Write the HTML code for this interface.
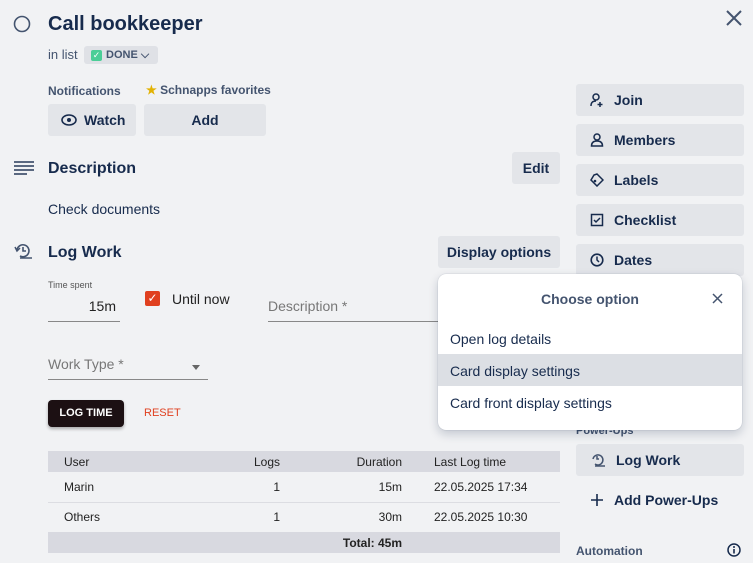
<!DOCTYPE html>
<html><head><style>
*{box-sizing:border-box;margin:0;padding:0}
body{width:753px;height:563px;overflow:hidden;background:#f1f2f4;font-family:"Liberation Sans",sans-serif;color:#172b4d;position:relative}
.a{position:absolute}
.btn{position:absolute;background:#e3e5e9;border-radius:3px;font-size:14px;font-weight:bold;color:#172b4d;display:flex;align-items:center}
.side{left:576px;width:168px;height:32px;padding-left:14px}
.side svg{margin-right:10px}
table{table-layout:fixed}
td{font-size:12px;color:#222;padding:0}
tr.h td{height:21px}
tr.r td{height:30px}
</style></head><body>
<svg class="a" style="left:13px;top:15px" width="18" height="18"><circle cx="9" cy="9" r="7.5" fill="none" stroke="#44546f" stroke-width="1.6"/></svg>
<div class="a" style="left:48px;top:13px;font-size:20px;font-weight:bold">Call bookkeeper</div>
<svg class="a" style="left:726px;top:10px" width="16" height="16"><path d="M1 1L15 15M15 1L1 15" stroke="#44546f" stroke-width="2"/></svg>
<div class="a" style="left:48px;top:47px;font-size:13px;color:#44546f">in list</div>
<div class="a" style="left:84px;top:46px;width:74px;height:18px;background:#dfe1e6;border-radius:3px;font-size:11px;font-weight:bold;color:#44546f;padding:3px 0 0 22px">DONE ⌵</div>
<div class="a" style="left:91px;top:50px;width:11px;height:11px;background:#4bce97;border-radius:2px;color:#fff;font-size:9px;line-height:11px;text-align:center">✓</div>
<div class="a" style="left:48px;top:84px;font-size:12px;font-weight:bold;color:#44546f">Notifications</div>
<div class="a" style="left:146px;top:83px;font-size:12px;font-weight:bold;color:#44546f"><span style="color:#e2b203">★</span> Schnapps favorites</div>
<div class="btn" style="left:48px;top:104px;width:88px;height:32px;padding-left:13px"><svg width="16" height="12" style="margin-right:7px"><ellipse cx="8" cy="6" rx="7" ry="5" fill="none" stroke="#172b4d" stroke-width="1.6"/><circle cx="8" cy="6" r="2" fill="#172b4d"/></svg>Watch</div>
<div class="btn" style="left:144px;top:104px;width:122px;height:32px;justify-content:center">Add</div>
<svg class="a" style="left:14px;top:160px" width="20" height="16"><path d="M0 2H20M0 6H20M0 10H20M0 14H13" stroke="#44546f" stroke-width="1.8"/></svg>
<div class="a" style="left:48px;top:160px;font-size:16px;font-weight:bold">Description</div>
<div class="btn" style="left:512px;top:152px;width:48px;height:32px;justify-content:center">Edit</div>
<div class="a" style="left:48px;top:201px;font-size:14px">Check documents</div>
<svg class="a" style="left:14px;top:243px" width="20" height="18"><path d="M3 7A6 6 0 1 1 6 13" fill="none" stroke="#44546f" stroke-width="1.6"/><path d="M1 4L3 8L6 5" fill="none" stroke="#44546f" stroke-width="1.5"/><path d="M9 4V8H12M6 15H18" stroke="#44546f" stroke-width="1.6" fill="none"/></svg>
<div class="a" style="left:48px;top:244px;font-size:16px;font-weight:bold">Log Work</div>
<div class="btn" style="left:438px;top:236px;width:122px;height:32px;justify-content:center">Display options</div>
<div class="a" style="left:48px;top:280px;font-size:9px;color:#555">Time spent</div>
<div class="a" style="left:48px;top:298px;width:72px;text-align:right;font-size:14px;color:#222;padding-right:4px">15m</div>
<div class="a" style="left:48px;top:321px;width:72px;height:1px;background:#888"></div>
<div class="a" style="left:145px;top:291px;width:15px;height:15px;background:#e0401f;border-radius:2px;color:#fff;font-size:12px;line-height:15px;text-align:center">✓</div>
<div class="a" style="left:172px;top:291px;font-size:14px;color:#222">Until now</div>
<div class="a" style="left:268px;top:298px;font-size:14px;color:#777">Description *</div>
<div class="a" style="left:268px;top:321px;width:170px;height:1px;background:#888"></div>
<div class="a" style="left:48px;top:356px;font-size:14px;color:#777">Work Type *</div>
<div class="a" style="left:192px;top:365px;border:4.5px solid transparent;border-top:5px solid #666"></div>
<div class="a" style="left:48px;top:379px;width:160px;height:1px;background:#888"></div>
<div class="a" style="left:48px;top:400px;width:76px;height:27px;background:#1c1013;border-radius:4px;color:#fff;font-size:11px;font-weight:bold;text-align:center;line-height:27px;box-shadow:0 2px 3px rgba(0,0,0,.3)">LOG TIME</div>
<div class="a" style="left:144px;top:407px;font-size:11px;color:#e0401f">RESET</div>
<table class="a" style="left:48px;top:451px;width:512px;border-collapse:collapse">
<colgroup><col style="width:180px"><col style="width:52px"><col style="width:122px"><col style="width:158px"></colgroup>
<tr class="h" style="background:#d8d9e0"><td style="padding-left:16px">User</td><td style="text-align:right">Logs</td><td style="text-align:right">Duration</td><td style="padding-left:32px">Last Log time</td></tr>
<tr class="r" style="border-bottom:1px solid #dcdde2"><td style="padding-left:16px">Marin</td><td style="text-align:right">1</td><td style="text-align:right">15m</td><td style="padding-left:32px">22.05.2025 17:34</td></tr>
<tr class="r"><td style="padding-left:16px">Others</td><td style="text-align:right">1</td><td style="text-align:right">30m</td><td style="padding-left:32px">22.05.2025 10:30</td></tr>
<tr class="h" style="background:#d8d9e0"><td></td><td></td><td style="text-align:right;font-weight:bold">Total: 45m</td><td></td></tr>
</table>
<div class="btn side" style="top:84px"><svg width="14" height="14"><circle cx="6" cy="4" r="3" fill="none" stroke="#172b4d" stroke-width="1.5"/><path d="M1 13C1 9 3 8 6 8M10 9V14M7.5 11.5H12.5" fill="none" stroke="#172b4d" stroke-width="1.5"/></svg>Join</div>
<div class="btn side" style="top:124px"><svg width="14" height="14"><circle cx="7" cy="4" r="3" fill="none" stroke="#172b4d" stroke-width="1.5"/><path d="M1.5 13C1.5 9 4 8 7 8S12.5 9 12.5 13Z" fill="none" stroke="#172b4d" stroke-width="1.5"/></svg>Members</div>
<div class="btn side" style="top:164px"><svg width="14" height="14"><path d="M7 1L13 7L7 13L1 7L4 2Z" fill="none" stroke="#172b4d" stroke-width="1.5"/><circle cx="5" cy="8" r="1.3" fill="#172b4d"/></svg>Labels</div>
<div class="btn side" style="top:204px"><svg width="14" height="14"><rect x="1.5" y="1.5" width="11" height="11" fill="none" stroke="#172b4d" stroke-width="1.5"/><path d="M4 7L6 9L10 5" fill="none" stroke="#172b4d" stroke-width="1.5"/></svg>Checklist</div>
<div class="btn side" style="top:244px"><svg width="14" height="14"><circle cx="7" cy="7" r="5.8" fill="none" stroke="#172b4d" stroke-width="1.6"/><path d="M7 3.5V7L9 9" fill="none" stroke="#172b4d" stroke-width="1.5"/></svg>Dates</div>
<div class="a" style="left:576px;top:425px;font-size:11px;font-weight:bold;color:#44546f">Power-Ups</div>
<div class="btn side" style="top:444px"><svg width="16" height="14"><path d="M3 6A5 5 0 1 1 5 11" fill="none" stroke="#44546f" stroke-width="1.5"/><path d="M7 3V6H9M5 13H15" stroke="#44546f" stroke-width="1.5" fill="none"/></svg>Log Work</div>
<div class="btn side" style="top:484px;background:none"><svg width="14" height="14"><path d="M7 1V13M1 7H13" stroke="#172b4d" stroke-width="1.6"/></svg>Add Power-Ups</div>
<div class="a" style="left:576px;top:544px;font-size:12px;font-weight:bold;color:#44546f">Automation</div>
<svg class="a" style="left:727px;top:543px" width="14" height="14"><circle cx="7" cy="7" r="6" fill="none" stroke="#172b4d" stroke-width="1.5"/><path d="M7 6V10.5" stroke="#172b4d" stroke-width="1.6"/><circle cx="7" cy="4" r="1" fill="#172b4d"/></svg>
<div class="a" style="left:438px;top:274px;width:304px;height:156px;background:#fff;border-radius:8px;box-shadow:0 4px 10px rgba(9,30,66,.2),0 0 1px rgba(9,30,66,.3)">
<div class="a" style="left:0;top:17px;width:304px;text-align:center;font-size:14px;font-weight:bold;color:#44546f">Choose option</div>
<svg class="a" style="left:274px;top:19px" width="11" height="11"><path d="M1 1L10 10M10 1L1 10" stroke="#44546f" stroke-width="1.5"/></svg>
<div class="a" style="left:12px;top:57px;font-size:14px;color:#172b4d">Open log details</div>
<div class="a" style="left:0;top:80px;width:304px;height:32px;background:#dcdfe4"></div>
<div class="a" style="left:12px;top:89px;font-size:14px;color:#172b4d">Card display settings</div>
<div class="a" style="left:12px;top:121px;font-size:14px;color:#172b4d">Card front display settings</div>
</div>
</body></html>
